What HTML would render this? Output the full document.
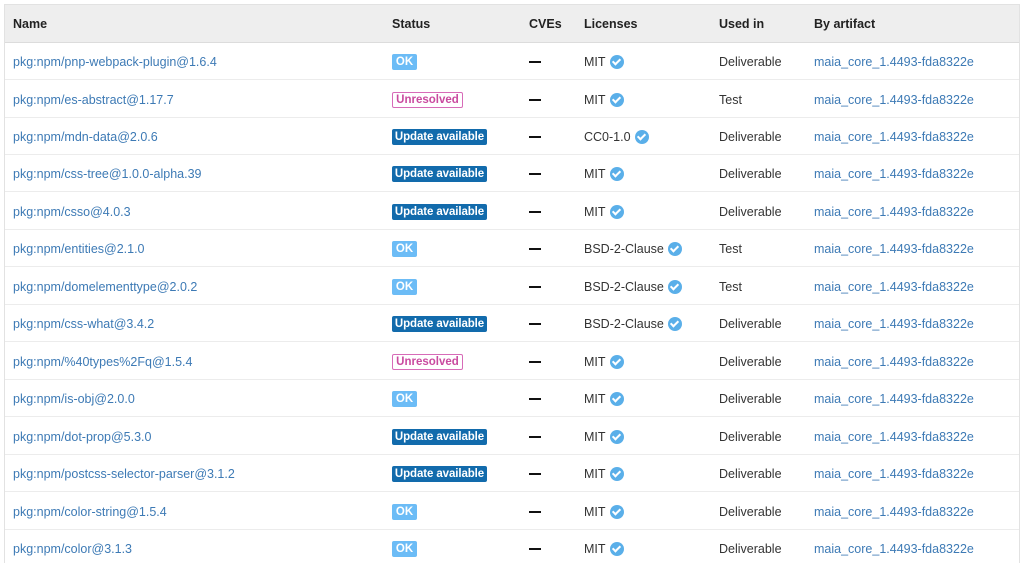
<!DOCTYPE html>
<html style="overflow:hidden;height:563px"><head><meta charset="utf-8"><style>
body{margin:0;background:#fff;font-family:"Liberation Sans",sans-serif;font-size:12.5px;color:#333;width:1024px;height:563px;overflow:hidden;position:relative}
.tbl{position:absolute;left:4px;top:4px;width:1014px;height:559px;overflow:hidden;border:1px solid #e2e2e2;border-bottom:none}
.hd{position:absolute;left:0;top:0;width:1014px;height:37px;background:#eeeeee;border-bottom:1px solid #dcdcdc}
.hd span{position:absolute;top:12px;font-weight:bold;color:#222;font-size:12.5px}
.r{position:absolute;left:0;width:1014px;height:36px;border-bottom:1.5px solid #ececec}
.r span,.r b,.r i{position:absolute}
.n{left:8px;top:12px;color:#3d7ab5}
.a{left:809px;top:12px;color:#3d7ab5}
.u{left:714px;top:12px;color:#333}
.l{left:579px;top:12px;color:#333}
.d{left:524px;top:18px;width:12px;height:2px;background:#111}
.bd{left:387px;top:11px;height:16px;line-height:17px;border-radius:2px;font-size:11.5px;font-weight:bold;font-style:normal;box-sizing:border-box;white-space:nowrap;overflow:hidden}
.ok{background:#6cbcf6;color:#fff;width:25px;text-align:center}
.up{background:#126bac;color:#fff;width:95px;text-align:center;letter-spacing:-0.1px}
.un{border:1px solid #d76bb8;color:#c94a9f;width:71px;text-align:center;line-height:15px}
.ck{display:inline-block;width:14px;height:14px;border-radius:50%;background:#5aafe9;vertical-align:-2px;margin-left:4px;position:relative}
.ck:after{content:"";position:absolute;left:4px;top:2px;width:3px;height:6px;border:solid #fff;border-width:0 2px 2px 0;transform:rotate(45deg)}
</style></head><body>
<div class="tbl">
<div class="hd"><span style="left:8px">Name</span><span style="left:387px">Status</span><span style="left:524px">CVEs</span><span style="left:579px">Licenses</span><span style="left:714px">Used in</span><span style="left:809px">By artifact</span></div>
<div class="r" style="top:38px"><span class="n">pkg:npm/pnp-webpack-plugin@1.6.4</span><i class="bd ok">OK</i><b class="d"></b><span class="l">MIT<i class="ck"></i></span><span class="u">Deliverable</span><span class="a">maia_core_1.4493-fda8322e</span></div>
<div class="r" style="top:75.5px"><span class="n">pkg:npm/es-abstract@1.17.7</span><i class="bd un">Unresolved</i><b class="d"></b><span class="l">MIT<i class="ck"></i></span><span class="u">Test</span><span class="a">maia_core_1.4493-fda8322e</span></div>
<div class="r" style="top:113px"><span class="n">pkg:npm/mdn-data@2.0.6</span><i class="bd up">Update available</i><b class="d"></b><span class="l">CC0-1.0<i class="ck"></i></span><span class="u">Deliverable</span><span class="a">maia_core_1.4493-fda8322e</span></div>
<div class="r" style="top:150.4px"><span class="n">pkg:npm/css-tree@1.0.0-alpha.39</span><i class="bd up">Update available</i><b class="d"></b><span class="l">MIT<i class="ck"></i></span><span class="u">Deliverable</span><span class="a">maia_core_1.4493-fda8322e</span></div>
<div class="r" style="top:187.9px"><span class="n">pkg:npm/csso@4.0.3</span><i class="bd up">Update available</i><b class="d"></b><span class="l">MIT<i class="ck"></i></span><span class="u">Deliverable</span><span class="a">maia_core_1.4493-fda8322e</span></div>
<div class="r" style="top:225.3px"><span class="n">pkg:npm/entities@2.1.0</span><i class="bd ok">OK</i><b class="d"></b><span class="l">BSD-2-Clause<i class="ck"></i></span><span class="u">Test</span><span class="a">maia_core_1.4493-fda8322e</span></div>
<div class="r" style="top:262.8px"><span class="n">pkg:npm/domelementtype@2.0.2</span><i class="bd ok">OK</i><b class="d"></b><span class="l">BSD-2-Clause<i class="ck"></i></span><span class="u">Test</span><span class="a">maia_core_1.4493-fda8322e</span></div>
<div class="r" style="top:300.2px"><span class="n">pkg:npm/css-what@3.4.2</span><i class="bd up">Update available</i><b class="d"></b><span class="l">BSD-2-Clause<i class="ck"></i></span><span class="u">Deliverable</span><span class="a">maia_core_1.4493-fda8322e</span></div>
<div class="r" style="top:337.7px"><span class="n">pkg:npm/%40types%2Fq@1.5.4</span><i class="bd un">Unresolved</i><b class="d"></b><span class="l">MIT<i class="ck"></i></span><span class="u">Deliverable</span><span class="a">maia_core_1.4493-fda8322e</span></div>
<div class="r" style="top:375.1px"><span class="n">pkg:npm/is-obj@2.0.0</span><i class="bd ok">OK</i><b class="d"></b><span class="l">MIT<i class="ck"></i></span><span class="u">Deliverable</span><span class="a">maia_core_1.4493-fda8322e</span></div>
<div class="r" style="top:412.6px"><span class="n">pkg:npm/dot-prop@5.3.0</span><i class="bd up">Update available</i><b class="d"></b><span class="l">MIT<i class="ck"></i></span><span class="u">Deliverable</span><span class="a">maia_core_1.4493-fda8322e</span></div>
<div class="r" style="top:450px"><span class="n">pkg:npm/postcss-selector-parser@3.1.2</span><i class="bd up">Update available</i><b class="d"></b><span class="l">MIT<i class="ck"></i></span><span class="u">Deliverable</span><span class="a">maia_core_1.4493-fda8322e</span></div>
<div class="r" style="top:487.5px"><span class="n">pkg:npm/color-string@1.5.4</span><i class="bd ok">OK</i><b class="d"></b><span class="l">MIT<i class="ck"></i></span><span class="u">Deliverable</span><span class="a">maia_core_1.4493-fda8322e</span></div>
<div class="r" style="top:524.9px"><span class="n">pkg:npm/color@3.1.3</span><i class="bd ok">OK</i><b class="d"></b><span class="l">MIT<i class="ck"></i></span><span class="u">Deliverable</span><span class="a">maia_core_1.4493-fda8322e</span></div>
</div>
</body></html>
